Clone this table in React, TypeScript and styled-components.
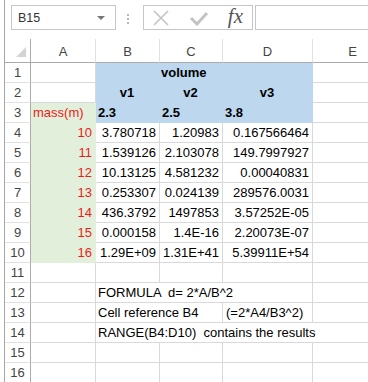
import React from "react";
import styled, { createGlobalStyle } from "styled-components";

const Global = createGlobalStyle`
  html, body { margin: 0; padding: 0; background: #fff; }
  * { box-sizing: border-box; }
`;

const GRID = "#d9d9d9";
const HEAD_LINE = "#ababab";
const HEAD_SEP = "#e1e1e1";
const BLUE = "#bdd7ee";
const GREEN = "#e2efda";
const RED = "#ec1c1c";

const Page = styled.div`
  width: 368px;
  height: 382px;
  overflow: hidden;
  background: #fff;
  padding-left: 4px;
  font-family: "Liberation Sans", Arial, sans-serif;
`;

const Frame = styled.div`
  border-left: 1px solid #a6a6a6;
  height: 100%;
`;

const FormulaBar = styled.div`
  display: flex;
  align-items: flex-start;
  height: 39px;
  padding: 5px 0 0 6px;
`;

const NameBox = styled.div`
  flex: 0 0 105px;
  height: 25px;
  border: 1px solid #c6c6c6;
  display: flex;
  align-items: center;
  justify-content: space-between;
  padding: 0 10px 0 6px;
  font-size: 12.5px;
  color: #333;
`;

const DropArrow = styled.span`
  width: 0;
  height: 0;
  border-left: 4px solid transparent;
  border-right: 4px solid transparent;
  border-top: 4px solid #777;
  margin-top: 1px;
`;

const Dots = styled.div`
  flex: 0 0 3px;
  margin: 9px 14px 0 10px;
  display: flex;
  flex-direction: column;
  align-items: center;
  gap: 2px;
`;

const Dot = styled.span`
  width: 2px;
  height: 2px;
  background: #b8b8b8;
`;

const FxBox = styled.div`
  flex: 0 0 110px;
  height: 25px;
  border: 1px solid #c6c6c6;
  display: flex;
  align-items: center;
  justify-content: space-between;
  padding: 0 9px 0 8px;
`;

const FxText = styled.span`
  font-family: "Liberation Serif", "Times New Roman", serif;
  font-style: italic;
  font-size: 21px;
  color: #555;
  line-height: 1;
  margin-top: -2px;
`;

const FormulaInput = styled.div`
  flex: 0 0 140px;
  height: 25px;
  margin-left: 2px;
  border: 1px solid #c6c6c6;
`;

const Sheet = styled.div`
  display: grid;
  grid-template-columns: 26px 65px 64px 63px 90px 80px;
  grid-template-rows: 24px;
  grid-auto-rows: 20px;
  font-size: 13px;
`;

const Corner = styled.div`
  border-right: 1px solid ${HEAD_LINE};
  border-bottom: 1px solid ${HEAD_LINE};
  display: flex;
  justify-content: flex-end;
  align-items: flex-end;
  padding: 0 4px 5px 0;
`;

const Triangle = styled.span`
  width: 0;
  height: 0;
  border-left: 10px solid transparent;
  border-bottom: 10px solid #d4d4d4;
`;

const ColHead = styled.div`
  border-right: 1px solid ${HEAD_SEP};
  border-bottom: 1px solid ${HEAD_LINE};
  display: flex;
  align-items: center;
  justify-content: center;
  color: #444;
  font-size: 13px;
  padding-top: 1px;
`;

const RowHead = styled.div`
  border-right: 1px solid ${HEAD_LINE};
  border-bottom: 1px solid ${HEAD_SEP};
  display: flex;
  align-items: center;
  justify-content: center;
  color: #444;
  font-size: 13px;
  line-height: 19px;
`;

type CellProps = {
  $fill?: string;
  $align?: "left" | "right" | "center";
  $bold?: boolean;
  $red?: boolean;
  $span?: number;
  $indent?: number;
};

const Cell = styled.div<CellProps>`
  grid-column: span ${(p) => p.$span ?? 1};
  background: ${(p) => p.$fill ?? "#fff"};
  border-right: 1px solid ${(p) => p.$fill ?? GRID};
  border-bottom: 1px solid ${(p) => p.$fill ?? GRID};
  line-height: 19px;
  padding: 0 3px 0 ${(p) => (p.$indent ?? 2)}px;
  text-align: ${(p) => p.$align ?? "left"};
  font-weight: ${(p) => (p.$bold ? 700 : 400)};
  color: ${(p) => (p.$red ? RED : "#000")};
  white-space: pre;
  overflow: visible;
`;

const XIcon = () => (
  <svg width="18" height="16" viewBox="0 0 18 16">
    <path d="M2 1 L16 15 M16 1 L2 15" stroke="#c4c4c4" strokeWidth="1.6" fill="none" />
  </svg>
);

const CheckIcon = () => (
  <svg width="20" height="16" viewBox="0 0 20 16">
    <path d="M2 8 L8 14 L18 3" stroke="#c4c4c4" strokeWidth="3" fill="none" />
  </svg>
);

const data: [string, string, string, string][] = [
  ["10", "3.780718", "1.20983", "0.167566464"],
  ["11", "1.539126", "2.103078", "149.7997927"],
  ["12", "10.13125", "4.581232", "0.00040831"],
  ["13", "0.253307", "0.024139", "289576.0031"],
  ["14", "436.3792", "1497853", "3.57252E-05"],
  ["15", "0.000158", "1.4E-16", "2.20073E-07"],
  ["16", "1.29E+09", "1.31E+41", "5.39911E+54"],
];

const Empty = ({ n }: { n: number }) => (
  <>
    {Array.from({ length: n }).map((_, i) => (
      <Cell key={i} />
    ))}
  </>
);

export default function App() {
  return (
    <Page>
      <Global />
      <Frame>
        <FormulaBar>
          <NameBox>
            <span>B15</span>
            <DropArrow />
          </NameBox>
          <Dots>
            <Dot />
            <Dot />
            <Dot />
          </Dots>
          <FxBox>
            <XIcon />
            <CheckIcon />
            <FxText>fx</FxText>
          </FxBox>
          <FormulaInput />
        </FormulaBar>
        <Sheet>
          <Corner>
            <Triangle />
          </Corner>
          {["A", "B", "C", "D", "E"].map((c) => (
            <ColHead key={c}>{c}</ColHead>
          ))}

          <RowHead>1</RowHead>
          <Cell />
          <Cell $fill={BLUE} $span={3} $bold $indent={65}>
            volume
          </Cell>
          <Cell />

          <RowHead>2</RowHead>
          <Cell />
          <Cell $fill={BLUE} $bold $align="center">v1</Cell>
          <Cell $fill={BLUE} $bold $align="center">v2</Cell>
          <Cell $fill={BLUE} $bold $align="center">v3</Cell>
          <Cell />

          <RowHead>3</RowHead>
          <Cell $fill={GREEN} $red>mass(m)</Cell>
          <Cell $fill={BLUE} $bold>2.3</Cell>
          <Cell $fill={BLUE} $bold>2.5</Cell>
          <Cell $fill={BLUE} $bold>3.8</Cell>
          <Cell />

          {data.map((r, i) => (
            <React.Fragment key={i}>
              <RowHead>{i + 4}</RowHead>
              <Cell $fill={GREEN} $red $align="right">{r[0]}</Cell>
              <Cell $align="right">{r[1]}</Cell>
              <Cell $align="right">{r[2]}</Cell>
              <Cell $align="right">{r[3]}</Cell>
              <Cell />
            </React.Fragment>
          ))}

          <RowHead>11</RowHead>
          <Empty n={5} />

          <RowHead>12</RowHead>
          <Cell />
          <Cell $span={3}>{"FORMULA  d= 2*A/B^2"}</Cell>
          <Cell />

          <RowHead>13</RowHead>
          <Cell />
          <Cell $span={2}>Cell reference B4</Cell>
          <Cell $indent={3}>(=2*A4/B3^2)</Cell>
          <Cell />

          <RowHead>14</RowHead>
          <Cell />
          <Cell $span={4}>{"RANGE(B4:D10)  contains the results"}</Cell>

          <RowHead>15</RowHead>
          <Empty n={5} />

          <RowHead>16</RowHead>
          <Empty n={5} />
        </Sheet>
      </Frame>
    </Page>
  );
}
